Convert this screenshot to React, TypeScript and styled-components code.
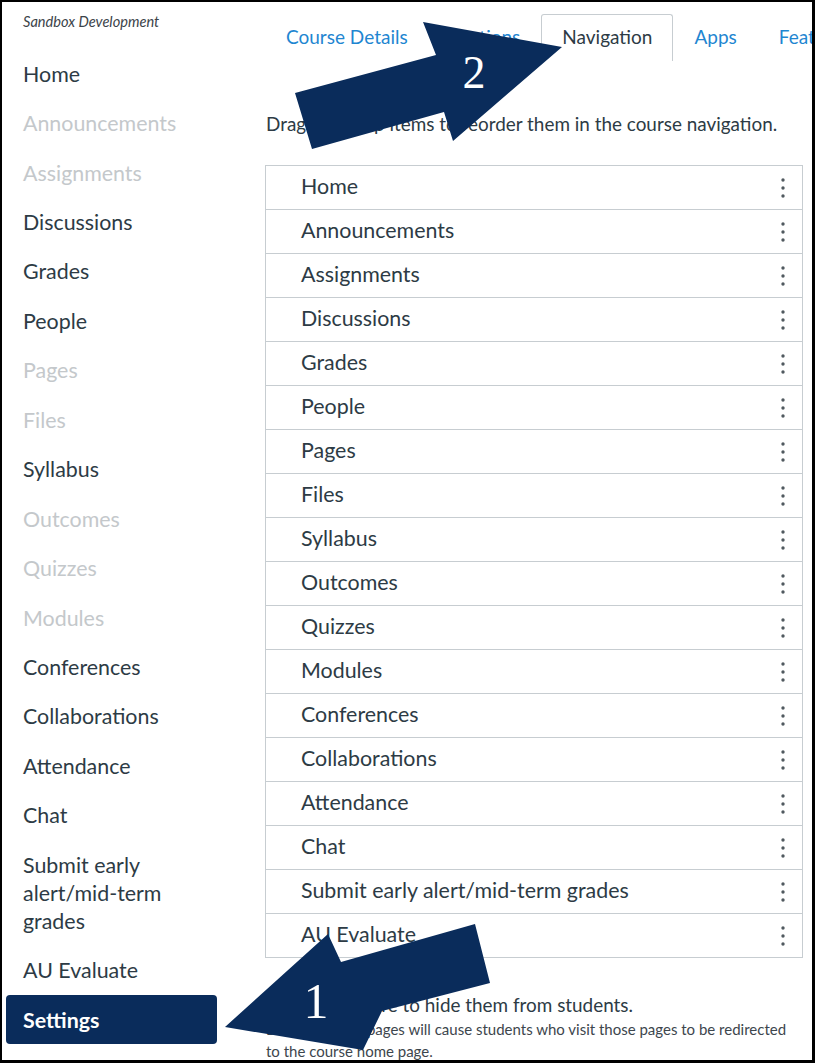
import styled, { createGlobalStyle } from "styled-components";

const GlobalStyle = createGlobalStyle`
  html, body {
    margin: 0;
    padding: 0;
    background: #ffffff;
  }
  * {
    box-sizing: border-box;
  }
`;

const sidebarItems = [
  { label: "Home", disabled: false },
  { label: "Announcements", disabled: true },
  { label: "Assignments", disabled: true },
  { label: "Discussions", disabled: false },
  { label: "Grades", disabled: false },
  { label: "People", disabled: false },
  { label: "Pages", disabled: true },
  { label: "Files", disabled: true },
  { label: "Syllabus", disabled: false },
  { label: "Outcomes", disabled: true },
  { label: "Quizzes", disabled: true },
  { label: "Modules", disabled: true },
  { label: "Conferences", disabled: false },
  { label: "Collaborations", disabled: false },
  { label: "Attendance", disabled: false },
  { label: "Chat", disabled: false },
  { label: "Submit early alert/mid-term grades", disabled: false },
  { label: "AU Evaluate", disabled: false },
];

const navRows = [
  "Home",
  "Announcements",
  "Assignments",
  "Discussions",
  "Grades",
  "People",
  "Pages",
  "Files",
  "Syllabus",
  "Outcomes",
  "Quizzes",
  "Modules",
  "Conferences",
  "Collaborations",
  "Attendance",
  "Chat",
  "Submit early alert/mid-term grades",
  "AU Evaluate",
];

const tabs = [
  { label: "Course Details", active: false },
  { label: "Sections", active: false },
  { label: "Navigation", active: true },
  { label: "Apps", active: false },
  { label: "Feature Options", active: false },
];

const Kebab = () => (
  <svg width="6" height="22" viewBox="0 0 6 22">
    <circle cx="3" cy="3" r="1.7" fill="#50595f" />
    <circle cx="3" cy="11" r="1.7" fill="#50595f" />
    <circle cx="3" cy="19" r="1.7" fill="#50595f" />
  </svg>
);

const Arrows = () => (
  <svg width="815" height="1063" viewBox="0 0 815 1063">
    <polygon
      points="295,93 436,55 423,22 562,47 453,141 444,112 312,149"
      fill="#0a2c5b"
    />
    <text
      x="474"
      y="88"
      textAnchor="middle"
      fill="#ffffff"
      fontFamily="'Liberation Serif', 'DejaVu Serif', serif"
      fontSize="46"
    >
      2
    </text>
    <polygon
      points="225,1027 328,934 341,962 475,924 490,983 382,1011 363,1050"
      fill="#0a2c5b"
    />
    <text
      x="316"
      y="1018"
      textAnchor="middle"
      fill="#ffffff"
      fontFamily="'Liberation Serif', 'DejaVu Serif', serif"
      fontSize="50"
    >
      1
    </text>
  </svg>
);

export default function App() {
  return (
    <>
      <GlobalStyle />
      <Frame>
        <Sidebar>
          <CourseLabel>Sandbox Development</CourseLabel>
          <SideList>
            {sidebarItems.map((item) => (
              <SideItem key={item.label} $disabled={item.disabled}>
                {item.label}
              </SideItem>
            ))}
            <SideItem $active>Settings</SideItem>
          </SideList>
        </Sidebar>
        <Main>
          <TabBar>
            {tabs.map((tab) => (
              <Tab key={tab.label} $active={tab.active}>
                {tab.label}
              </Tab>
            ))}
          </TabBar>
          <Content>
            <Hint>Drag and drop items to reorder them in the course navigation.</Hint>
            <NavList>
              {navRows.map((row) => (
                <NavRow key={row}>
                  <span>{row}</span>
                  <KebabButton>
                    <Kebab />
                  </KebabButton>
                </NavRow>
              ))}
            </NavList>
            <HiddenHint>Drag items here to hide them from students.</HiddenHint>
            <SmallNote>
              Disabling most pages will cause students who visit those pages to be redirected
              to the course home page.
            </SmallNote>
          </Content>
        </Main>
        <Overlay>
          <Arrows />
        </Overlay>
      </Frame>
    </>
  );
}

const Frame = styled.div`
  position: relative;
  width: 815px;
  height: 1063px;
  border-style: solid;
  border-color: #000000;
  border-width: 2px 3px 3px 2px;
  display: flex;
  overflow: hidden;
  background: #ffffff;
  font-family: Lato, "Noto Sans", sans-serif;
  color: #2d3b45;
`;

const Sidebar = styled.div`
  width: 263px;
  flex-shrink: 0;
  padding: 10px 0 0 4px;
  display: flex;
  flex-direction: column;
`;

const CourseLabel = styled.div`
  padding-left: 17px;
  font-size: 14.6px;
  line-height: 20px;
  font-style: italic;
  color: #3b4349;
`;

const SideList = styled.div`
  margin-top: 17px;
  display: flex;
  flex-direction: column;
  width: 211px;
`;

const SideItem = styled.div<{ $disabled?: boolean; $active?: boolean }>`
  padding: 10.72px 16px 10.72px 17px;
  font-size: 21.4px;
  line-height: 28px;
  border-radius: 4px;
  color: ${(p) => (p.$active ? "#ffffff" : p.$disabled ? "#c4c8cb" : "#2d3b45")};
  background: ${(p) => (p.$active ? "#0a2c5b" : "transparent")};
  font-weight: ${(p) => (p.$active ? 700 : 400)};
`;

const Main = styled.div`
  flex: 1;
  min-width: 0;
  display: flex;
  flex-direction: column;
  overflow: hidden;
`;

const TabBar = styled.div`
  margin-top: 12px;
  display: flex;
  border-bottom: 1px solid #c7cdd1;
  white-space: nowrap;
`;

const Tab = styled.div<{ $active?: boolean }>`
  flex-shrink: 0;
  height: 47px;
  padding: 0 20px 4px;
  display: flex;
  align-items: center;
  font-size: 19px;
  color: ${(p) => (p.$active ? "#2d3b45" : "#1f86d1")};
  background: #ffffff;
  border: 1px solid ${(p) => (p.$active ? "#c7cdd1" : "transparent")};
  border-bottom: none;
  border-radius: 3px 3px 0 0;
  margin-bottom: -1px;
`;

const Content = styled.div`
  padding: 49px 9px 0 0;
  display: flex;
  flex-direction: column;
`;

const Hint = styled.div`
  padding-left: 1px;
  font-size: 18.9px;
  line-height: 27px;
`;

const NavList = styled.div`
  margin-top: 28px;
  border: 1px solid #c7cdd1;
  border-bottom: none;
  display: flex;
  flex-direction: column;
`;

const NavRow = styled.div`
  height: 44px;
  padding: 0 16px 3px 35px;
  display: flex;
  align-items: center;
  justify-content: space-between;
  border-bottom: 1px solid #c7cdd1;
  font-size: 21.4px;
  color: #2d3b45;
`;

const KebabButton = styled.div`
  display: flex;
  align-items: center;
  margin-top: 3px;
`;

const HiddenHint = styled.div`
  margin-top: 33px;
  padding-left: 1px;
  font-size: 18.9px;
  line-height: 27px;
`;

const SmallNote = styled.div`
  padding-left: 1px;
  padding-right: 10px;
  font-size: 15px;
  line-height: 22px;
  color: #3d464d;
`;

const Overlay = styled.div`
  position: absolute;
  left: -2px;
  top: -2px;
  pointer-events: none;
`;
